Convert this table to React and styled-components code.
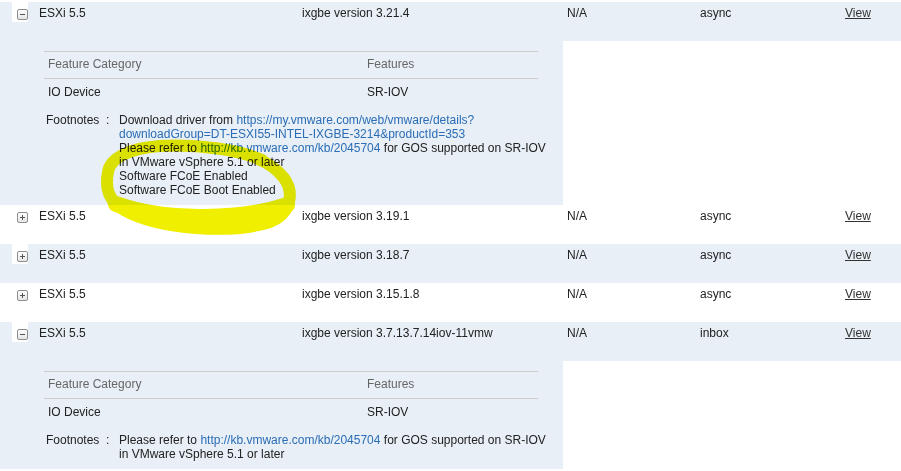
import React from "react";
import styled, { createGlobalStyle } from "styled-components";

const Global = createGlobalStyle`
  html, body { margin: 0; padding: 0; background: #fff; }
  body { font-family: "Liberation Sans", Arial, sans-serif; font-size: 12px; color: #222; }
`;

const BLUE = "#e8eff7";

const Page = styled.div`
  position: relative;
  width: 901px;
  height: 471px;
  overflow: hidden;
  padding-top: 2px;
  box-sizing: border-box;
`;

const Row = styled.div`
  display: grid;
  grid-template-columns: 35px 263px 265px 133px 145px 1fr;
  height: 39px;
  background: ${(p) => (p.$shaded ? BLUE : "#fff")};
  line-height: 14px;
`;

const Cell = styled.div`
  padding: 4px 4px 0;
  white-space: nowrap;
`;

const IconCell = styled.div`
  padding-left: 12px;
`;

const IconBox = styled.div`
  width: 11px;
  height: 11px;
  padding: 7px 0 2px 5px;
  background: #fff;
  cursor: pointer;
`;

const ViewLink = styled.a`
  color: #333;
  text-decoration: underline;
`;

const Detail = styled.div`
  display: grid;
  grid-template-columns: 563px 1fr;
`;

const Panel = styled.div`
  background: ${BLUE};
  padding: 10px 0 8px 44px;
  line-height: 14px;
`;

const InnerTable = styled.div`
  display: grid;
  grid-template-columns: 319px 175px;
  width: 494px;
`;

const HeadCell = styled.div`
  border-top: 1px solid #cdcdcd;
  padding: 5px 4px 7px;
  color: #666;
`;

const BodyCell = styled.div`
  border-top: 1px solid #cdcdcd;
  padding: 6px 4px;
  color: #222;
`;

const Footnotes = styled.div`
  display: flex;
  margin-top: 8px;
  padding-left: 2px;
`;

const NoteLabel = styled.div`
  width: 60px;
`;

const Colon = styled.div`
  width: 13px;
`;

const Notes = styled.div`
  width: 432px;
`;

const Link = styled.a`
  color: #2a6db5;
  text-decoration: none;
`;

const Highlight = styled.svg`
  position: absolute;
  left: 0;
  top: 0;
  pointer-events: none;
  mix-blend-mode: multiply;
`;

function ToggleIcon({ open }) {
  return (
    <svg width="11" height="11" viewBox="0 0 11 11">
      <defs>
        <linearGradient id={open ? "gm" : "gp"} x1="0" y1="0" x2="0" y2="1">
          <stop offset="0" stopColor="#ffffff" />
          <stop offset="1" stopColor="#e4e4e4" />
        </linearGradient>
      </defs>
      <rect x="0.5" y="0.5" width="10" height="10" rx="1.5" fill={`url(#${open ? "gm" : "gp"})`} stroke="#8e8e8e" />
      <line x1="3" y1="5.5" x2="8" y2="5.5" stroke="#555" />
      {!open && <line x1="5.5" y1="3" x2="5.5" y2="8" stroke="#555" />}
    </svg>
  );
}

function MainRow({ shaded, open, version, type }) {
  return (
    <Row $shaded={shaded}>
      <IconCell>
        <IconBox>
          <ToggleIcon open={open} />
        </IconBox>
      </IconCell>
      <Cell>ESXi 5.5</Cell>
      <Cell>{version}</Cell>
      <Cell>N/A</Cell>
      <Cell>{type}</Cell>
      <Cell>
        <ViewLink href="#">View</ViewLink>
      </Cell>
    </Row>
  );
}

function DetailRow({ children }) {
  return (
    <Detail>
      <Panel>
        <InnerTable>
          <HeadCell>Feature Category</HeadCell>
          <HeadCell>Features</HeadCell>
          <BodyCell>IO Device</BodyCell>
          <BodyCell>SR-IOV</BodyCell>
        </InnerTable>
        <Footnotes>
          <NoteLabel>Footnotes</NoteLabel>
          <Colon>:</Colon>
          <Notes>{children}</Notes>
        </Footnotes>
      </Panel>
      <div />
    </Detail>
  );
}

const KbNote = () => (
  <>
    Please refer to <Link href="#">http://kb.vmware.com/kb/2045704</Link> for GOS supported on SR-IOV in VMware vSphere 5.1 or later
  </>
);

export default function App() {
  return (
    <Page>
      <Global />
      <MainRow shaded open version="ixgbe version 3.21.4" type="async" />
      <DetailRow>
        Download driver from{" "}
        <Link href="#">
          https://my.vmware.com/web/vmware/details?
          <wbr />
          downloadGroup=DT-ESXI55-INTEL-IXGBE-3214&amp;productId=353
        </Link>
        <br />
        <KbNote />
        <br />
        Software FCoE Enabled
        <br />
        Software FCoE Boot Enabled
      </DetailRow>
      <MainRow version="ixgbe version 3.19.1" type="async" />
      <MainRow shaded version="ixgbe version 3.18.7" type="async" />
      <MainRow version="ixgbe version 3.15.1.8" type="async" />
      <MainRow shaded open version="ixgbe version 3.7.13.7.14iov-11vmw" type="inbox" />
      <DetailRow>
        <KbNote />
      </DetailRow>
      <Highlight width="901" height="471" viewBox="0 0 901 471">
        <path
          d="M 262 160 C 240 150, 200 144, 160 146 C 130 148, 110 158, 108 172 C 105 188, 108 200, 124 210 C 160 230, 232 234, 270 222 C 292 213, 294 192, 284 178 C 276 168, 268 163, 258 159"
          fill="none"
          stroke="#f0ef00"
          strokeWidth="12"
          strokeLinecap="round"
          strokeLinejoin="round"
        />
        <path
          d="M 116 204 C 160 220, 236 222, 287 205"
          fill="none"
          stroke="#f0ef00"
          strokeWidth="16"
          strokeLinecap="round"
        />
      </Highlight>
    </Page>
  );
}
